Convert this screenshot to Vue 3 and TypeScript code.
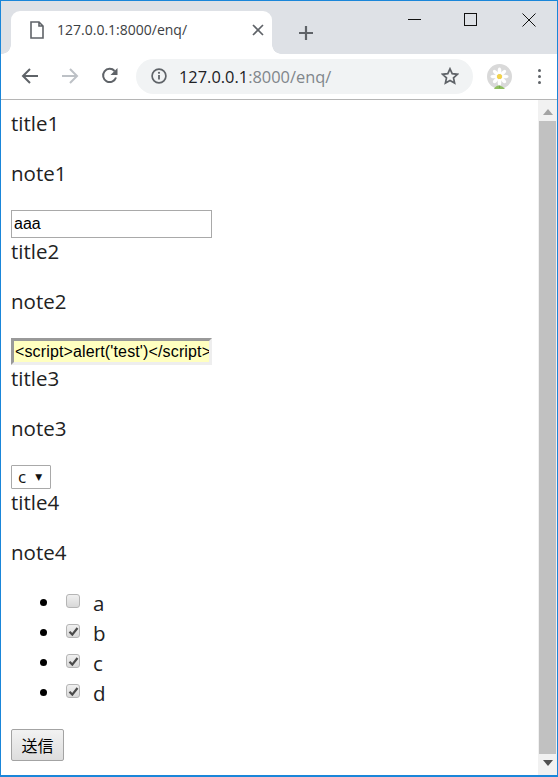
<script setup lang="ts">
interface Opt { label: string; checked: boolean }
const options: Opt[] = [
  { label: 'a', checked: false },
  { label: 'b', checked: true },
  { label: 'c', checked: true },
  { label: 'd', checked: true },
]
</script>

<template>
  <div class="window">
    <header class="tabstrip">
      <div class="tab">
        <svg class="file" width="14" height="18" viewBox="0 0 14 18"><path d="M1 1h8l4 4v12H1z M9 1v4h4" fill="none" stroke="#5f6368" stroke-width="1.6"/></svg>
        <span class="tab-title">127.0.0.1:8000/enq/</span>
        <svg class="tab-close" width="12" height="12" viewBox="0 0 12 12"><path d="M1 1l10 10M11 1L1 11" stroke="#5f6368" stroke-width="1.7"/></svg>
      </div>
      <svg class="plus" width="16" height="16" viewBox="0 0 16 16"><path d="M8 1v14M1 8h14" stroke="#5f6368" stroke-width="2.2"/></svg>
      <div class="controls">
        <svg width="14" height="14" viewBox="0 0 14 14"><path d="M0 6.5h13" stroke="#111" stroke-width="1"/></svg>
        <svg width="14" height="14" viewBox="0 0 14 14"><rect x="0.5" y="0.5" width="12" height="12" fill="none" stroke="#111" stroke-width="1"/></svg>
        <svg class="ctl-close" width="14" height="14" viewBox="0 0 14 14"><path d="M0.5 0.5l13 13M13.5 0.5l-13 13" stroke="#111" stroke-width="1"/></svg>
      </div>
    </header>

    <nav class="toolbar">
      <svg class="nav" width="18" height="16" viewBox="0 0 18 16"><path d="M17 8H2M9 1L2 8l7 7" fill="none" stroke="#5f6368" stroke-width="2"/></svg>
      <svg class="nav fwd" width="18" height="16" viewBox="0 0 18 16"><path d="M1 8h15M9 1l7 7-7 7" fill="none" stroke="#bdc1c6" stroke-width="2"/></svg>
      <svg class="nav reload" width="18" height="18" viewBox="0 0 18 18"><path d="M15 10.5A6.6 6.6 0 1 1 13.6 4" fill="none" stroke="#5f6368" stroke-width="2"/><path d="M16.5 1v7h-7z" fill="#5f6368"/></svg>
      <div class="omnibox">
        <svg width="16" height="16" viewBox="0 0 16 16"><circle cx="8" cy="8" r="6.9" fill="none" stroke="#5f6368" stroke-width="1.7"/><path d="M8 7v4.6" stroke="#5f6368" stroke-width="1.8"/><circle cx="8" cy="4.8" r="1.1" fill="#5f6368"/></svg>
        <span class="url"><span class="host">127.0.0.1</span>:8000/enq/</span>
        <svg class="star" width="18" height="18" viewBox="0 0 18 18"><path d="M9 1.8l2.2 4.9 5.3.6-4 3.6 1.1 5.2L9 13.4l-4.6 2.7 1.1-5.2-4-3.6 5.3-.6z" fill="none" stroke="#5f6368" stroke-width="1.7"/></svg>
      </div>
      <svg class="avatar" width="25" height="25" viewBox="0 0 25 25">
        <circle cx="12.5" cy="12.5" r="12.5" fill="#d9d9d9"/>
        <path d="M7 25q2-4 5.500-3.500T18 25z" fill="#8fbf60"/>
        <path d="M12.500 14v10" stroke="#7aa850" stroke-width="1"/>
        <g fill="#fff"><ellipse cx="12.500" cy="7" rx="1.800" ry="3.500"/><ellipse cx="12.500" cy="18" rx="1.800" ry="3.500"/><ellipse cx="7" cy="12.500" rx="3.500" ry="1.800"/><ellipse cx="18" cy="12.500" rx="3.500" ry="1.800"/><ellipse cx="8.600" cy="8.600" rx="1.800" ry="3.300" transform="rotate(-45 8.600 8.600)"/><ellipse cx="16.400" cy="8.600" rx="1.800" ry="3.300" transform="rotate(45 16.400 8.600)"/><ellipse cx="8.600" cy="16.400" rx="1.800" ry="3.300" transform="rotate(45 8.600 16.400)"/><ellipse cx="16.400" cy="16.400" rx="1.800" ry="3.300" transform="rotate(-45 16.400 16.400)"/></g>
        <circle cx="12.500" cy="12.500" r="2.600" fill="#f2d24c"/>
      </svg>
      <div class="menu"><i></i><i></i><i></i></div>
    </nav>

    <div class="viewport">
      <main class="page">
        <form>
          <p>title1</p>
          <p>note1</p>
          <input class="field" type="text" value="aaa" />
          <p>title2</p>
          <p>note2</p>
          <input class="field flagged" type="text" value="<script>alert('test')</script>" />
          <p>title3</p>
          <p>note3</p>
          <div class="select"><span>c</span><span class="arrow">▼</span></div>
          <p>title4</p>
          <p>note4</p>
          <ul>
            <li v-for="o in options" :key="o.label">
              <span class="check">
                <svg v-if="o.checked" width="11" height="11" viewBox="0 0 11 11"><path d="M1.500 5.800l2.800 2.800 5.200-6.600" fill="none" stroke="#4a4a4a" stroke-width="2.200"/></svg>
              </span>
              <span class="opt">{{ o.label }}</span>
            </li>
          </ul>
          <button type="button">送信</button>
        </form>
      </main>
      <aside class="scrollbar">
        <svg width="10" height="6" viewBox="0 0 10 6"><path d="M5 0l5 6H0z" fill="#a3a3a3"/></svg>
        <div class="thumb"></div>
        <svg width="10" height="6" viewBox="0 0 10 6"><path d="M5 6L0 0h10z" fill="#505050"/></svg>
      </aside>
    </div>
  </div>
</template>

<style>
html, body { margin: 0; padding: 0; background: #fff; }
</style>

<style scoped>
.window {
  width: 558px;
  height: 777px;
  box-sizing: border-box;
  border: 1px solid #1a86d9;
  border-bottom-width: 2px;
  display: flex;
  flex-direction: column;
  overflow: hidden;
  font-family: "Open Sans", "Noto Sans", sans-serif;
  color: #222;
}
.tabstrip {
  height: 53px;
  flex: none;
  background: #dee1e6;
  display: flex;
  align-items: flex-start;
  padding-left: 10px;
}
.tab {
  position: relative;
  width: 261px;
  height: 43px;
  margin-top: 10px;
  background: #fff;
  border-radius: 9px 9px 0 0;
  display: flex;
  align-items: center;
  box-sizing: border-box;
  padding: 0 0 6px 19px;
}
.tab::before, .tab::after {
  content: "";
  position: absolute;
  bottom: 0;
  width: 9px;
  height: 9px;
}
.tab::before { left: -9px; background: radial-gradient(circle at 0 0, #dee1e6 8.500px, #fff 9px); }
.tab::after { right: -9px; background: radial-gradient(circle at 100% 0, #dee1e6 8.500px, #fff 9px); }
.tab-title {
  margin-left: 13px;
  font-size: 14px;
  color: #3c4043;
  width: 183px;
  white-space: nowrap;
}
.tab-close { margin-left: 12px; }
.plus { margin: 24px 0 0 26px; }
.controls {
  margin-left: auto;
  display: flex;
  gap: 42px;
  padding: 12px 21px 0 0;
}
.ctl-close { margin-left: 2px; }
.toolbar {
  height: 46px;
  flex: none;
  box-sizing: border-box;
  background: #fff;
  border-bottom: 1px solid #b5b5b5;
  display: flex;
  align-items: center;
  padding: 0 0 1px 20px;
}
.fwd { margin-left: 22px; }
.reload { margin-left: 22px; }
.omnibox {
  width: 337px;
  height: 35px;
  margin-left: 17px;
  background: #f1f3f4;
  border-radius: 18px;
  display: flex;
  align-items: center;
  padding-left: 15px;
  box-sizing: border-box;
}
.url {
  margin-left: 12px;
  font-size: 16.400px;
  color: #80868b;
  white-space: nowrap;
}
.host { color: #202124; }
.star { margin-left: auto; margin-right: 14px; }
.avatar { margin-left: 14px; }
.menu {
  margin-left: 26px;
  display: flex;
  flex-direction: column;
  gap: 3px;
}
.menu i { width: 3px; height: 3px; border-radius: 50%; background: #5f6368; display: block; }
.viewport {
  flex: 1;
  min-height: 0;
  display: flex;
}
.page {
  flex: 1;
  min-width: 0;
  overflow: hidden;
}
form {
  padding: 10px 10px 0;
  display: block;
  font-size: 20.500px;
  line-height: 27px;
}
p { margin: 0 0 23px; }
.field {
  display: block;
  box-sizing: border-box;
  width: 201px;
  height: 28px;
  padding: 1px 2px;
  border: 1px solid #a9a9a9;
  border-radius: 0;
  background: #fff;
  font: 16px/20px "Liberation Sans", Arial, sans-serif;
  color: #000;
  outline: none;
}
.field + p { margin-top: 0; padding-top: 0; }
.flagged {
  height: 27px;
  border-width: 3px;
  border-style: solid;
  border-color: #999 #eee #eee #999;
  padding: 0 0 0 1px;
  background: #ffffc0;
  letter-spacing: 0.14px;
}
.select {
  box-sizing: border-box;
  width: 40px;
  height: 24px;
  border: 1px solid #a9a9a9;
  border-radius: 1px;
  display: flex;
  align-items: center;
  padding-left: 6px;
  font: 17px/20px "Open Sans", sans-serif;
  color: #111;
}
.arrow {
  margin-left: 9px;
  font: 9px/20px "DejaVu Sans", sans-serif;
}
ul {
  margin: -1px 0 21px;
  padding: 0 0 0 29px;
  list-style: none;
}
li {
  height: 30px;
  display: flex;
  align-items: center;
}
li::before {
  content: "";
  width: 7px;
  height: 7px;
  margin-top: -2px;
  border-radius: 50%;
  background: #000;
}
.check {
  display: flex;
  align-items: center;
  justify-content: center;
  box-sizing: border-box;
  width: 14px;
  height: 14px;
  margin: -4px 0 0 19px;
  border: 1px solid #b5b5b5;
  border-radius: 3px;
  background: linear-gradient(#f0f0f0, #d8d8d8);
}
.opt { margin-left: 13px; }
button {
  display: block;
  box-sizing: border-box;
  width: 53px;
  height: 32px;
  padding: 0;
  border: 1px solid #a3a3a3;
  border-radius: 2px;
  background: linear-gradient(#f2f2f2, #dddddd);
  font: 16px/20px "Noto Sans CJK JP", sans-serif;
  color: #000;
}
.scrollbar {
  width: 19px;
  flex: none;
  background: #f1f1f1;
  display: flex;
  flex-direction: column;
  align-items: center;
  padding: 9px 0 9px;
  box-sizing: border-box;
}
.thumb {
  flex: 1;
  width: 17px;
  background: #c1c1c1;
  margin: 6px 0;
}
</style>
